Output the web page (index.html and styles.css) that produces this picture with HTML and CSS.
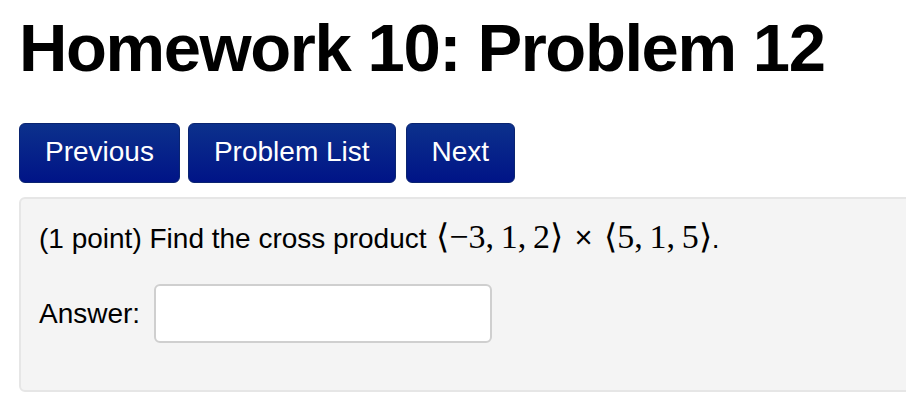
FILE: index.html
```html
<!DOCTYPE html>
<html lang="en">
<head>
    <meta charset="UTF-8">
    <title>Homework 10: Problem 12</title>
    <link rel="stylesheet" href="styles.css">
</head>
<body>
    <div class="page">
        <h1 class="page-title">Homework 10: Problem 12</h1>

        <!-- Navigatie -->
        <div class="nav-buttons">
            <a class="nav-btn" href="#">Previous</a>
            <a class="nav-btn" href="#">Problem List</a>
            <a class="nav-btn" href="#">Next</a>
        </div>

        <!-- Opgave -->
        <div class="problem">
            <p class="problem-text">(1 point) Find the cross product <span class="math">&#10216;&minus;3,&#8201;1,&#8201;2&#10217; <span class="times">&times;</span> &#10216;5,&#8201;1,&#8201;5&#10217;</span>.</p>
            <div class="answer-row">
                <label for="answer">Answer:</label>
                <input type="text" id="answer" class="answer-input">
            </div>
        </div>
    </div>
</body>
</html>
```

FILE: styles.css
```css
* {
    margin: 0;
    padding: 0;
    box-sizing: border-box;
}

body {
    background: #fff;
    font-family: "Liberation Sans", Arial, sans-serif;
    color: #000;
    overflow: hidden;
}

.page {
    width: 1000px;
    padding-left: 19px;
}

/* Titel */
.page-title {
    font-size: 67px;
    font-weight: bold;
    line-height: 1;
    padding-top: 14px;
    margin-bottom: 42px;
    letter-spacing: -1.4px;
}

/* Knoppen */
.nav-buttons {
    display: flex;
    gap: 8px;
    margin-bottom: 14px;
}

.nav-btn {
    display: flex;
    align-items: center;
    height: 60px;
    padding: 0 25px 2px;
    font-size: 28px;
    color: #fff;
    text-decoration: none;
    background-image: linear-gradient(#0c318c, #001487);
    border: 1px solid #0a2470;
    border-radius: 6px;
}

.nav-btn + .nav-btn + .nav-btn {
    margin-left: 2px;
}

/* Opgave blok */
.problem {
    background: #f4f4f4;
    border: 2px solid #e6e6e6;
    border-radius: 6px;
    padding: 20px 18px 47px;
}

.problem-text {
    font-size: 28px;
    line-height: 36px;
    margin-bottom: 27px;
}

.math {
    font-family: "Liberation Serif", "Times New Roman", serif;
    font-size: 34px;
    word-spacing: 3px;
    margin-left: 2px;
}

.times {
    font-family: "Liberation Sans", Arial, sans-serif;
    font-size: 31px;
}

.answer-row {
    display: flex;
    align-items: center;
    gap: 14px;
}

.answer-row label {
    font-size: 28px;
}

.answer-input {
    width: 338px;
    height: 59px;
    background: #fff;
    border: 2px solid #cfcfcf;
    border-radius: 6px;
    font-size: 24px;
    padding: 0 10px;
}
```
